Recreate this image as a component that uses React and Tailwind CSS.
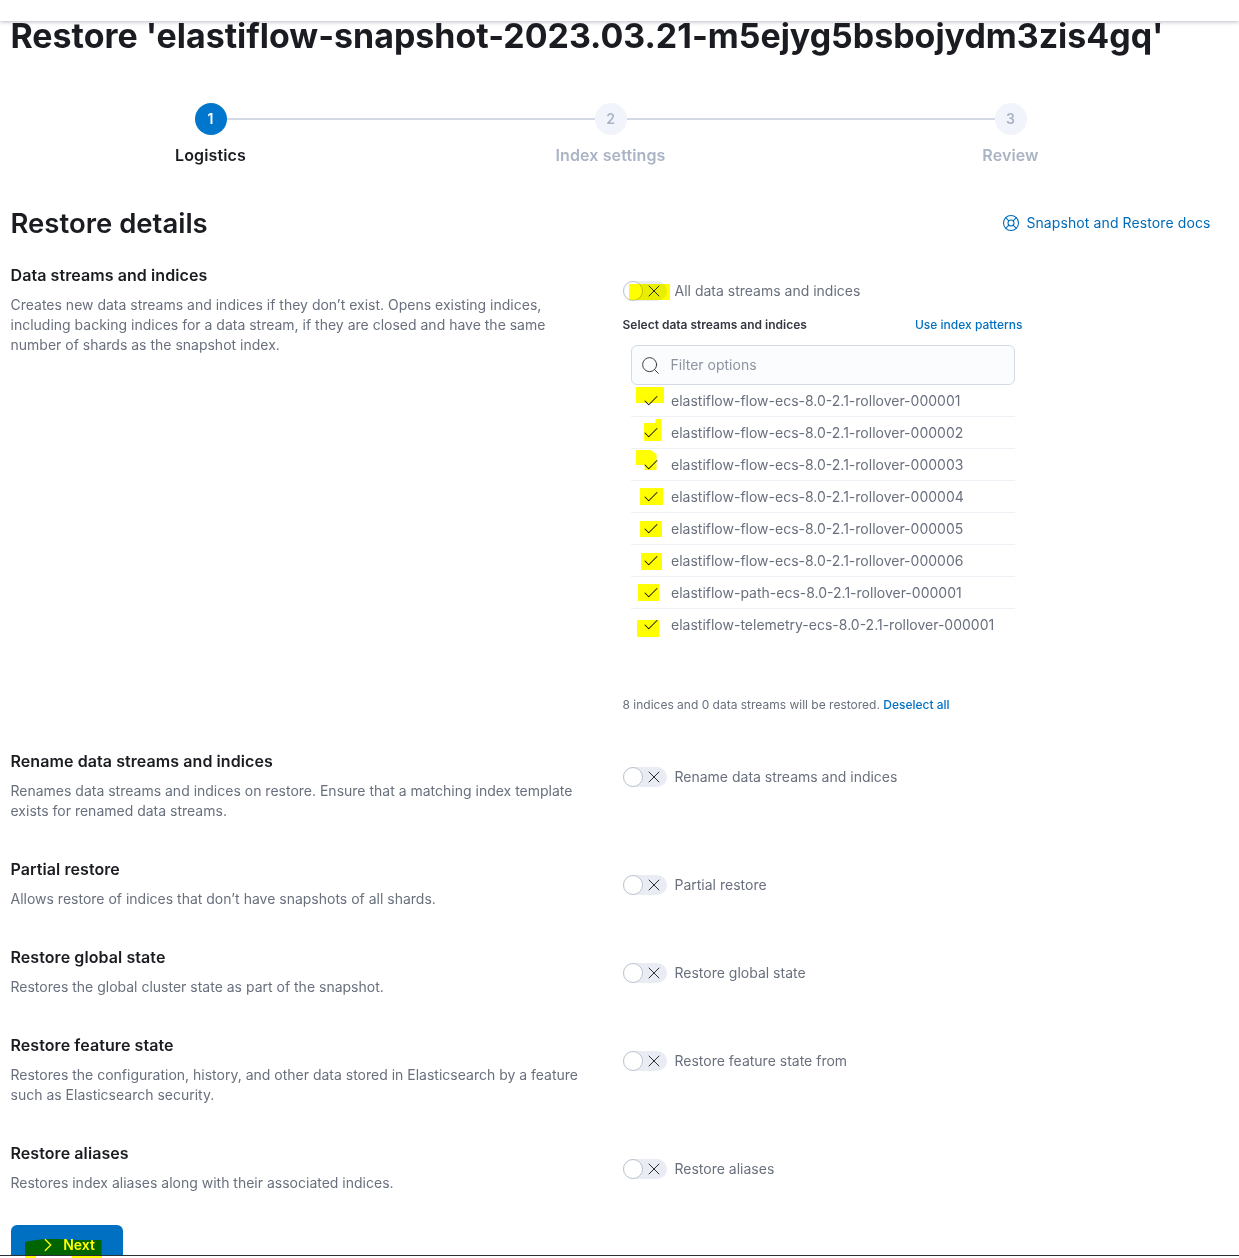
import React from 'react';
import { Check, ChevronRight, LifeBuoy, Search, X } from 'lucide-react';

const indices = [
    { name: 'elastiflow-flow-ecs-8.0-2.1-rollover-000001', mark: 'left-[5px] top-[2px] w-[28px] h-[16px]' },
    { name: 'elastiflow-flow-ecs-8.0-2.1-rollover-000002', mark: 'left-[13px] top-[2px] w-[18px] h-[22px] [clip-path:polygon(12px_0,18px_0,18px_22px,0_22px,0_4px,12px_4px)]' },
    { name: 'elastiflow-flow-ecs-8.0-2.1-rollover-000003', mark: 'left-[5px] top-[1px] w-[21px] h-[20px] [clip-path:polygon(0_0,15px_0,21px_4px,21px_20px,9px_20px,9px_15px,0_15px)]' },
    { name: 'elastiflow-flow-ecs-8.0-2.1-rollover-000004', mark: 'left-[9px] top-[7px] w-[23px] h-[17px]' },
    { name: 'elastiflow-flow-ecs-8.0-2.1-rollover-000005', mark: 'left-[9px] top-[8px] w-[22px] h-[16px]' },
    { name: 'elastiflow-flow-ecs-8.0-2.1-rollover-000006', mark: 'left-[10px] top-[8px] w-[21px] h-[17px]' },
    { name: 'elastiflow-path-ecs-8.0-2.1-rollover-000001', mark: 'left-[7px] top-[7px] w-[21px] h-[17px]' },
    { name: 'elastiflow-telemetry-ecs-8.0-2.1-rollover-000001', mark: 'left-[6px] top-[11px] w-[22px] h-[17px]' },
];

const sections = [
    {
        title: 'Rename data streams and indices',
        text: 'Renames data streams and indices on restore. Ensure that a matching index template exists for renamed data streams.',
        label: 'Rename data streams and indices',
    },
    {
        title: 'Partial restore',
        text: 'Allows restore of indices that don’t have snapshots of all shards.',
        label: 'Partial restore',
    },
    {
        title: 'Restore global state',
        text: 'Restores the global cluster state as part of the snapshot.',
        label: 'Restore global state',
    },
    {
        title: 'Restore feature state',
        text: 'Restores the configuration, history, and other data stored in Elasticsearch by a feature such as Elasticsearch security.',
        label: 'Restore feature state from',
    },
    {
        title: 'Restore aliases',
        text: 'Restores index aliases along with their associated indices.',
        label: 'Restore aliases',
    },
];

const Toggle = ({ label, marked }) => (
    <div className="flex h-6 items-center gap-2">
        <span className="relative flex h-5 w-11 shrink-0 items-center rounded-full bg-[#e9edf3]">
            <span className="h-5 w-5 rounded-full border border-[#bcc3ce] bg-white" />
            <X size={20} strokeWidth={1.1} className="absolute left-[21px] text-[#1a1c21]" />
            {marked && <span className="absolute left-[6px] top-[3px] h-[16px] w-[41px] bg-[#ffff00] mix-blend-multiply" />}
        </span>
        <span className="text-sm text-[#69707d]">{label}</span>
    </div>
);

const Section = ({ title, text, children }) => (
    <section className="flex">
        <div className="w-[612px] shrink-0 pr-[30px]">
            <h3 className="text-base leading-6 font-semibold tracking-[0.08px] text-[#1a1c21]">{title}</h3>
            <p className="mt-2 text-sm leading-5 text-[#69707d]">{text}</p>
        </div>
        <div className="w-[400px] pt-4">{children}</div>
    </section>
);

const Step = ({ number, label, active, first, last }) => (
    <div className="flex w-[400px] flex-col items-center">
        <div className="flex w-full items-center">
            <span className={`h-0.5 flex-1 ${first ? '' : 'bg-[#d3dae6]'}`} />
            <span className={`flex h-8 w-8 items-center justify-center rounded-full text-sm font-semibold ${active ? 'bg-[#0077cc] text-white' : 'bg-[#f1f4fa] text-[#abb4c4]'}`}>
                {number}
            </span>
            <span className={`h-0.5 flex-1 ${last ? '' : 'bg-[#d3dae6]'}`} />
        </div>
        <span className={`mt-[8px] text-base leading-6 font-semibold tracking-[0.12px] ${active ? 'text-[#1a1c21]' : 'text-[#abb4c4]'}`}>{label}</span>
    </div>
);

const App = () => {
    return (
        <div className="flex h-[1258px] flex-col overflow-hidden bg-white font-['Inter',sans-serif]">
            <header className="relative z-10 h-[21px] shrink-0 bg-white shadow-[0_1px_4px_rgba(60,66,90,0.35)]" />

            <main className="min-h-0 flex-1 overflow-hidden pl-[10.5px]">
                <h1 className="text-[33.95px] leading-[30px] font-bold whitespace-nowrap text-[#1a1c21]">
                    Restore 'elastiflow-snapshot-2023.03.21-m5ejyg5bsbojydm3zis4gq'
                </h1>

                <div className="mt-[52px] flex">
                    <Step number="1" label="Logistics" active first />
                    <Step number="2" label="Index settings" />
                    <Step number="3" label="Review" last />
                </div>

                <div className="mt-[36px] flex h-10 w-[1200px] items-center justify-between">
                    <h2 className="text-[27.5px] leading-10 font-semibold text-[#1a1c21]">Restore details</h2>
                    <a className="flex items-center gap-[6.5px] text-sm tracking-[0.1px] text-[#006bb8]">
                        <LifeBuoy size={18} strokeWidth={1.4} />
                        Snapshot and Restore docs
                    </a>
                </div>

                <div className="mt-5 flex flex-col gap-9">
                    <Section
                        title="Data streams and indices"
                        text="Creates new data streams and indices if they don’t exist. Opens existing indices, including backing indices for a data stream, if they are closed and have the same number of shards as the snapshot index."
                    >
                        <Toggle label="All data streams and indices" marked />
                        <div className="mt-3 flex h-5 items-center justify-between text-xs">
                            <span className="font-semibold text-[#343741]">Select data streams and indices</span>
                            <a className="font-medium text-[#0071c2]">Use index patterns</a>
                        </div>

                        <div className="mx-2 mt-2.5 h-[344px]">
                            <div className="flex h-10 items-center gap-[10px] rounded-md border border-[#d3dae6] bg-[#fbfcfd] pl-[8px]">
                                <Search size={21} strokeWidth={1.1} className="text-[#343741]" />
                                <span className="text-sm text-[#8d94a1]">Filter options</span>
                            </div>
                            {indices.map((item) => (
                                <div key={item.name} className="relative flex h-8 items-center gap-[11px] border-b border-[#eef1f6] pl-[11.5px] last:border-b-0">
                                    <Check size={18} strokeWidth={1.4} className="text-[#1a1c21]" />
                                    <span className={`absolute bg-[#ffff00] mix-blend-multiply ${item.mark}`} />
                                    <span className="text-sm whitespace-nowrap text-[#69707d]">{item.name}</span>
                                </div>
                            ))}
                        </div>

                        <p className="mt-2 text-xs leading-4 text-[#69707d]">
                            8 indices and 0 data streams will be restored. <a className="font-medium text-[#0071c2]">Deselect all</a>
                        </p>
                    </Section>

                    {sections.map((section) => (
                        <Section key={section.title} title={section.title} text={section.text}>
                            <Toggle label={section.label} />
                        </Section>
                    ))}
                </div>

                <button className="relative mt-8 flex h-10 w-28 items-center justify-center rounded-md bg-[#0071c2]">
                    {/* green highlighter stroke sits behind the label, left of centre */}
                    <span className="absolute left-[14px] top-[14px] h-[26px] w-[77px] bg-[#006400] [clip-path:polygon(0_3px,5px_2px,20px_0,35px_0,45px_1px,77px_1px,77px_26px,0_26px)]" />
                    <span className="relative flex items-center gap-[4px] text-sm font-semibold text-[#ffff00]">
                        <ChevronRight size={22} strokeWidth={1.4} className="-ml-px" />
                        Next
                    </span>
                </button>
            </main>

            <div className="flex h-[3px] shrink-0 border-t border-[#2b2f36] bg-white pl-[25px]">
                <span className="w-[11px] bg-[#ffff00]" />
                <span className="ml-[36px] w-[30px] bg-[#ffff00]" />
            </div>
        </div>
    );
};

export default App;
